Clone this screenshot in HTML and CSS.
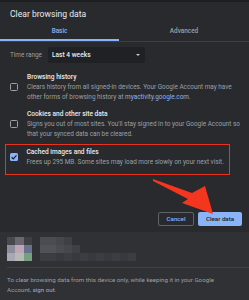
FILE: index.html
```html
<!DOCTYPE html>
<html>
<head>
<meta charset="utf-8">
<link rel="stylesheet" href="styles.css">
</head>
<body>
<div class="page">
  <div class="dialog">
    <div class="title">Clear browsing data</div>
    <div class="tabs">
      <div class="tab active">Basic</div>
      <div class="tab">Advanced</div>
    </div>
    <div class="range">
      <span class="range-label">Time range</span>
      <div class="select"><span>Last 4 weeks</span><i class="caret"></i></div>
    </div>
    <div class="item first">
      <span class="cb"></span>
      <div class="txt">
        <div class="it">Browsing history</div>
        <div class="desc">Clears history from all signed-in devices. Your Google Account may have<br>other forms of browsing history at <span class="link">myactivity.google.com</span>.</div>
      </div>
    </div>
    <div class="item second">
      <span class="cb"></span>
      <div class="txt">
        <div class="it">Cookies and other site data</div>
        <div class="desc">Signs you out of most sites. You'll stay signed in to your Google Account so<br>that your synced data can be cleared.</div>
      </div>
    </div>
    <div class="item hl">
      <span class="cb on"><svg viewBox="0 0 8 8" width="8" height="8"><path d="M1.6 4.2 L3.3 5.8 L6.5 2.4" fill="none" stroke="#202124" stroke-width="1.2"/></svg></span>
      <div class="txt">
        <div class="it">Cached images and files</div>
        <div class="desc">Frees up 295 MB. Some sites may load more slowly on your next visit.</div>
      </div>
    </div>
    <div class="actions">
      <button class="btn cancel">Cancel</button>
      <button class="btn primary">Clear data</button>
    </div>
  </div>
  <div class="footer">
    <div class="account">
      <div class="avatar">
        <span class="a1"></span><span class="a2"></span><span class="a3"></span>
        <span class="a4"></span><span class="a5"></span><span class="a6"></span>
        <span class="a7"></span><span class="a8"></span><span class="a9"></span>
      </div>
      <div class="blur">
        <span class="p1"></span><span class="p1"></span><span class="p2"></span><span class="p3"></span><span></span><span></span><span></span><span></span><span></span><span></span><span></span><span></span>
        <span class="p4"></span><span class="p4"></span><span class="p1"></span><span class="p2"></span><span class="p3"></span><span></span><span></span><span></span><span></span><span></span><span></span><span></span>
        <span class="p5"></span><span class="p5"></span><span class="p6"></span><span class="p5"></span><span class="p6"></span><span class="p5"></span><span class="p6"></span><span class="p5"></span><span class="p6"></span><span class="p5"></span><span class="p6"></span><span class="p5"></span>
      </div>
    </div>
    <div class="note">To clear browsing data from this device only, while keeping it in your Google<br>Account, <span class="link">sign out</span>.</div>
  </div>
  <svg class="arrow" width="249" height="300" viewBox="0 0 249 300">
    <polygon points="153,179 192,193 205,186 213,214 182,203 188,199 153,181" fill="#f4361e"/>
  </svg>
</div>
</body>
</html>
```
FILE: styles.css
```css
* { box-sizing: border-box; margin: 0; padding: 0; }
html, body { width: 249px; height: 300px; overflow: hidden; background: #292a2d; }
body { font-family: Roboto, "Liberation Sans", sans-serif; color: #e8eaed; }
.page { position: relative; width: 249px; height: 300px; }
.dialog { background: #292a2d; border-top: 2px solid #1d1e20; }
.title { padding: 6px 0 0 10px; font-size: 8.6px; line-height: 12px; color: #e8eaed; }
.tabs { display: grid; grid-template-columns: 119px 1fr; border-bottom: 1px solid #3c4043; }
.tab { text-align: center; font-size: 6.4px; font-weight: 500; line-height: 10px; padding: 6px 0 3px; border-bottom: 2px solid transparent; color: #9aa0a6; }
.tab.active { color: #8ab4f8; border-bottom-color: #8ab4f8; }
.range { display: flex; align-items: center; padding: 5px 0 0 10px; gap: 6px; }
.range-label { font-size: 6.4px; color: #9aa0a6; width: 32px; white-space: nowrap; }
.select { width: 97px; height: 16px; background: #202124; border-radius: 2px; display: flex; align-items: center; justify-content: space-between; padding: 0 5px 0 4px; font-size: 6.6px; font-weight: 500; }
.caret { width: 0; height: 0; border-left: 2.2px solid transparent; border-right: 2.2px solid transparent; border-top: 2.2px solid #c4c7ca; }
.item { display: flex; align-items: center; padding: 0 10px; }
.item.first { margin-top: 9px; }
.item.second { margin-top: 7px; }
.cb { width: 8px; height: 8px; border: 1.2px solid #9aa0a6; border-radius: 1.5px; margin-right: 9px; flex: none; display: block; }
.cb.on { background: #8ab4f8; border: none; }
.cb svg { display: block; }
.it { font-size: 6.6px; font-weight: 500; line-height: 10px; color: #e8eaed; white-space: nowrap; }
.desc { font-size: 6.4px; line-height: 10px; color: #9aa0a6; white-space: nowrap; }
.link { color: #8ab4f8; }
.item.hl { margin: 5px 19px 0 5px; padding: 1.5px 0 7px 3.5px; border: 1.5px solid #e8341f; }
.actions { display: flex; justify-content: flex-end; gap: 4px; padding: 37px 7px 6px 0; }
.btn { height: 14px; border-radius: 2px; font-family: Roboto, "Liberation Sans", sans-serif; font-size: 6.2px; font-weight: 500; }
.cancel { width: 36px; background: transparent; border: 1px solid #5f6368; color: #8ab4f8; }
.primary { width: 44px; background: #8ab4f8; border: none; color: #202124; }
.footer { background: #303135; height: 68px; padding: 5px 0 0 7px; }
.account { display: flex; gap: 8px; }
.avatar { display: grid; grid-template-columns: repeat(3, 8.4px); grid-template-rows: repeat(3, 8px); width: 25px; }
.a1 { background: #47494f; } .a2 { background: #6c6670; } .a3 { background: #3d3f45; }
.a4 { background: #8d8b9c; } .a5 { background: #c0a5b6; } .a6 { background: #66738a; }
.a7 { background: #a8a8b2; } .a8 { background: #b6b9b4; } .a9 { background: #76a07f; }
.blur { display: grid; grid-template-columns: repeat(12, 8px); grid-template-rows: repeat(3, 8px); }
.p1 { background: #4a4c51; } .p2 { background: #45474c; } .p3 { background: #3e4045; }
.p4 { background: #505257; } .p5 { background: #3b3d42; } .p6 { background: #38393e; }
.footer .account { height: 24px; }
.note { margin-top: 6px; border-top: 1px solid #3f4145; padding-top: 7px; font-size: 6.2px; line-height: 10px; color: #9aa0a6; white-space: nowrap; }
.arrow { position: absolute; left: 0; top: 0; pointer-events: none; }
```
